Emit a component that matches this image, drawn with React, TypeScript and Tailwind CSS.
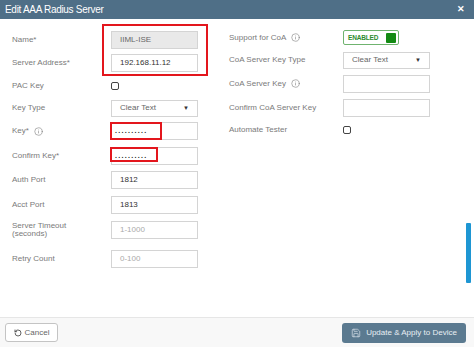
import { Info, RotateCcw, Save } from "lucide-react";

type Row = {
	label: string;
	info?: boolean;
	h: string;
	kind: "input" | "select" | "checkbox" | "toggle" | "password";
	value?: string;
	placeholder?: string;
	disabled?: boolean;
	twoLine?: boolean;
};

const leftRows: Row[] = [
	{ label: "Name*", h: "h-[23px]", kind: "input", value: "IIML-ISE", disabled: true },
	{ label: "Server Address*", h: "h-[23px]", kind: "input", value: "192.168.11.12" },
	{ label: "PAC Key", h: "h-[24px]", kind: "checkbox" },
	{ label: "Key Type", h: "h-[20px]", kind: "select", value: "Clear Text" },
	{ label: "Key*", info: true, h: "h-[26px]", kind: "password" },
	{ label: "Confirm Key*", h: "h-[24px]", kind: "password" },
	{ label: "Auth Port", h: "h-[24px]", kind: "input", value: "1812" },
	{ label: "Acct Port", h: "h-[25px]", kind: "input", value: "1813" },
	{ label: "Server Timeout (seconds)", h: "h-[25px]", kind: "input", placeholder: "1-1000", twoLine: true },
	{ label: "Retry Count", h: "h-[33px]", kind: "input", placeholder: "0-100" },
];

const rightRows: Row[] = [
	{ label: "Support for CoA", info: true, h: "h-[19px]", kind: "toggle" },
	{ label: "CoA Server Key Type", h: "h-[26px]", kind: "select", value: "Clear Text" },
	{ label: "CoA Server Key", info: true, h: "h-[21px]", kind: "input" },
	{ label: "Confirm CoA Server Key", h: "h-[28px]", kind: "input" },
	{ label: "Automate Tester", h: "h-[15px]", kind: "checkbox" },
];

function Field({ row }: { row: Row }) {
	if (row.kind === "checkbox") {
		return <div className="w-[8px] h-[8px] border-[1.5px] border-[#444] rounded-[2px]" />;
	}
	if (row.kind === "toggle") {
		return (
			<div className="w-[56px] h-[15px] border border-[#6fb36f] rounded-[2px] flex items-center justify-between pl-[4px] pr-[2px]">
				<span className="text-[6.5px] text-[#2e8b2e] font-semibold tracking-tight">ENABLED</span>
				<div className="w-[10px] h-[10px] bg-[#138a13] rounded-[1px]" />
			</div>
		);
	}
	if (row.kind === "select") {
		return (
			<div className="w-[87px] h-[17px] border border-[#d4d4d4] flex items-center justify-between px-[8px] text-[#666]">
				<span className="text-[8px]">{row.value}</span>
				<span className="text-[6px] text-[#333]">▼</span>
			</div>
		);
	}
	if (row.kind === "password") {
		return (
			<div className="w-[87px] h-[18px] border border-[#d4d4d4] flex items-center px-[3px]">
				<span className="text-[7px] font-bold text-[#222] tracking-[1.3px] leading-none -mt-[2px]">..........</span>
			</div>
		);
	}
	return (
		<div
			className={`w-[87px] h-[18px] border border-[#d4d4d4] flex items-center px-[8px] ${
				row.disabled ? "bg-[#e9e9e9]" : "bg-white"
			}`}
		>
			{row.value ? (
				<span className={`text-[8px] ${row.disabled ? "text-[#666]" : "text-[#333]"}`}>{row.value}</span>
			) : (
				<span className="text-[8px] text-[#aaa]">{row.placeholder}</span>
			)}
		</div>
	);
}

function FormColumn({ rows, labelWidth }: { rows: Row[]; labelWidth: string }) {
	return (
		<div className="flex flex-col">
			{rows.map((row) => (
				<div key={row.label} className={`${row.h} flex items-center`}>
					<div className={`${labelWidth} flex items-center gap-[5px] text-[8px] text-[#7a7a7a]`}>
						{row.twoLine ? (
							<span className="leading-[8px]">
								Server Timeout
								<br />
								(seconds)
							</span>
						) : (
							<span>{row.label}</span>
						)}
						{row.info && <Info size={9} strokeWidth={1.5} className="text-[#777]" />}
					</div>
					<Field row={row} />
				</div>
			))}
		</div>
	);
}

export default function App() {
	return (
		<div
			className="relative w-[474px] h-[347px] bg-white flex flex-col overflow-hidden"
			style={{ fontFamily: '"Liberation Sans", Arial, sans-serif' }}
		>
			{/* Header */}
			<div className="h-[19px] bg-[#4f6f87] flex items-center justify-between pl-[5px] pr-[9px]">
				<span className="text-[10px] tracking-[-0.3px] text-white">Edit AAA Radius Server</span>
				<span className="text-[9px] text-white font-bold">✕</span>
			</div>

			{/* Body */}
			<div className="flex-1 flex pt-[9px] pl-[12px]">
				<FormColumn rows={leftRows} labelWidth="w-[99px]" />
				<div className="ml-[31px]">
					<FormColumn rows={rightRows} labelWidth="w-[114px]" />
				</div>
			</div>

			{/* Footer */}
			<div className="h-[30px] border-t border-[#e6e6e6] bg-[#f8f8f8] flex items-center justify-between pl-[5px] pr-[8px]">
				<div className="w-[53px] h-[19px] border border-[#c4c4c4] rounded-[3px] bg-white flex items-center justify-center gap-[3px] text-[8px] text-[#666]">
					<RotateCcw size={8} strokeWidth={2.5} className="text-[#444]" />
					<span>Cancel</span>
				</div>
				<div className="w-[124px] h-[20px] rounded-[3px] bg-[#5b7a90] flex items-center justify-center gap-[5px] text-[8px] text-[#e8eef3]">
					<Save size={10} strokeWidth={1.5} />
					<span>Update &amp; Apply to Device</span>
				</div>
			</div>

			{/* Annotation boxes */}
			<div className="absolute left-[102px] top-[24px] w-[106px] h-[52px] border-[2.5px] border-[#e3161d]" />
			<div className="absolute left-[110px] top-[122px] w-[52px] h-[18px] border-[2.5px] border-[#e3161d]" />
			<div className="absolute left-[110px] top-[147px] w-[48px] h-[15px] border-[2.5px] border-[#e3161d]" />

			{/* Scrollbar */}
			<div className="absolute left-[466px] top-[223px] w-[5px] h-[60px] bg-[#1e96d3] rounded-[1px]" />
		</div>
	);
}
